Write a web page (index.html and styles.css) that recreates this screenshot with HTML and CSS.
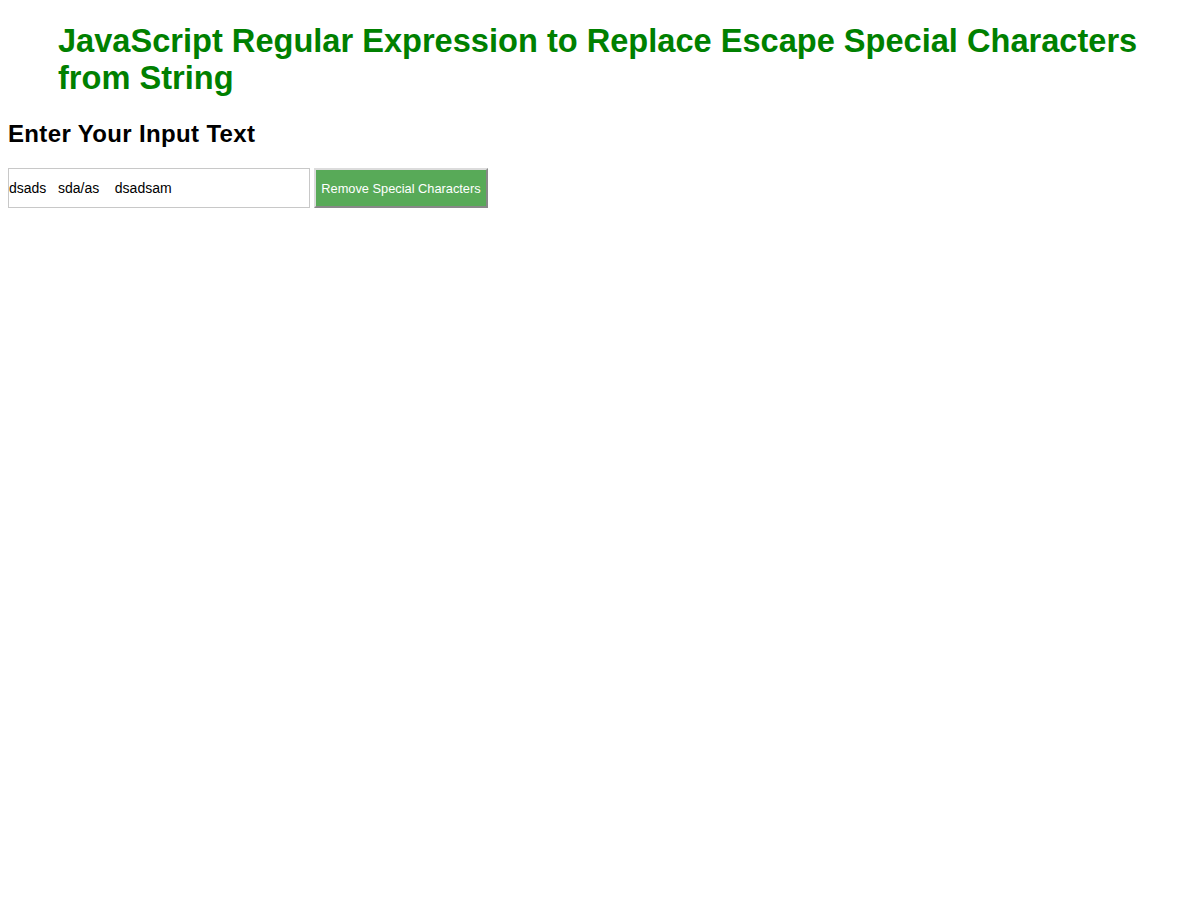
FILE: index.html
```html
<!DOCTYPE html>
<html>
<head>
<meta charset="utf-8">
<title>Remove Special Characters</title>
<link rel="stylesheet" href="styles.css">
</head>
<body>
<h1 class="title">JavaScript Regular Expression to Replace Escape Special Characters from String</h1>
<h2 class="subtitle">Enter Your Input Text</h2>
<div class="row">
<input class="text-input" type="text" value="dsads   sda/as    dsadsam">
<button class="btn">Remove Special Characters</button>
</div>
</body>
</html>
```
FILE: styles.css
```css
body {
  margin: 8px;
  font-family: "Liberation Sans", Arial, sans-serif;
  background: #fff;
  color: #000;
}
.title {
  color: #008000;
  font-size: 32.6px;
  line-height: 37px;
  font-weight: bold;
  margin: 14px 0 24px 0;
  padding-left: 50px;
}
.subtitle {
  font-size: 24px;
  font-weight: bold;
  letter-spacing: 0.35px;
  margin: 24px 0 20px 0;
}
.row {
  display: flex;
  gap: 4px;
  align-items: stretch;
}
.text-input {
  box-sizing: border-box;
  width: 302px;
  height: 40px;
  border: 1px solid #c8c8c8;
  padding: 0;
  font-family: "Liberation Sans", Arial, sans-serif;
  font-size: 14px;
  color: #000;
  outline: none;
}
.btn {
  box-sizing: border-box;
  width: 174px;
  height: 40px;
  padding: 0;
  background: #58aa58;
  color: #fff;
  border: 2px solid;
  border-color: #dcdcdc #888 #888 #dcdcdc;
  font-family: "Liberation Sans", Arial, sans-serif;
  font-size: 12.8px;
}
```
